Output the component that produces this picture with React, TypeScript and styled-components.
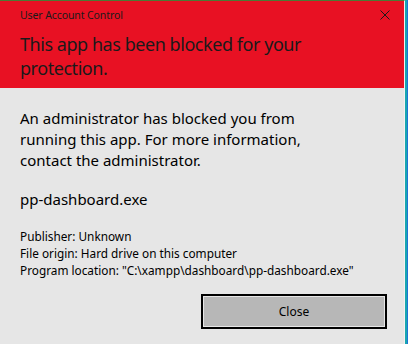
import React from "react";
import styled, { createGlobalStyle } from "styled-components";

const Global = createGlobalStyle`
  html, body { margin: 0; padding: 0; background: #e6e6e6; }
  body { font-family: "Noto Sans", "Open Sans", sans-serif; color: #000; }
`;

const Screen = styled.div`
  width: 408px;
  height: 344px;
  display: flex;
  overflow: hidden;
`;

const Dialog = styled.div`
  flex: 1;
  display: flex;
  flex-direction: column;
  background: #e6e6e6;
  border-top: 1px solid #4b7a34;
  border-right: 1px solid #f2f2f2;
`;

const EdgeStripe = styled.div`
  width: 3px;
  background: linear-gradient(to right, #19a6b0 0 2px, #1d74d6 2px 3px);
`;

const Header = styled.div`
  background: #e81123;
  height: 87px;
  padding: 0 20px;
  display: flex;
  flex-direction: column;
  color: #1a1a1a;
`;

const TitleBar = styled.div`
  display: flex;
  justify-content: space-between;
  align-items: center;
  height: 28px;
`;

const Caption = styled.span`
  font-size: 10.5px;
  letter-spacing: -0.1px;
  line-height: 28px;
`;

const CloseX = styled.svg`
  width: 10px;
  height: 10px;
  margin-right: -6px;
`;

const Heading = styled.div`
  font-size: 18px;
  letter-spacing: -0.45px;
  line-height: 24px;
  margin-top: 3px;
`;

const Body = styled.div`
  padding: 20px 17px 0 20px;
  display: flex;
  flex-direction: column;
`;

const Message = styled.p`
  margin: 0;
  font-size: 15px;
  line-height: 21px;
`;

const FileName = styled.p`
  margin: 18px 0 0;
  font-size: 15px;
  line-height: 21px;
`;

const Details = styled.div`
  margin-top: 18px;
  font-size: 11.8px;
  line-height: 17px;
`;

const Footer = styled.div`
  display: flex;
  justify-content: flex-end;
  padding-top: 15px;
`;

const Button = styled.button`
  width: 186px;
  height: 35px;
  background: #b7b7b7;
  border: 2px solid #000;
  box-shadow: inset 0 0 0 1px #e6e6e6;
  font-family: inherit;
  font-size: 12px;
  color: #000;
  padding: 0;
`;

export default function App() {
  return (
    <>
      <Global />
      <Screen>
        <Dialog>
          <Header>
            <TitleBar>
              <Caption>User Account Control</Caption>
              <CloseX viewBox="0 0 10 10">
                <path d="M0.5 0.5 L9.5 9.5 M9.5 0.5 L0.5 9.5" stroke="#1a1a1a" strokeWidth="1" fill="none" />
              </CloseX>
            </TitleBar>
            <Heading>
              This app has been blocked for your
              <br />
              protection.
            </Heading>
          </Header>
          <Body>
            <Message>
              An administrator has blocked you from
              <br />
              running this app. For more information,
              <br />
              contact the administrator.
            </Message>
            <FileName>pp-dashboard.exe</FileName>
            <Details>
              <div>Publisher: Unknown</div>
              <div>File origin: Hard drive on this computer</div>
              <div>Program location: "C:\xampp\dashboard\pp-dashboard.exe"</div>
            </Details>
            <Footer>
              <Button>Close</Button>
            </Footer>
          </Body>
        </Dialog>
        <EdgeStripe />
      </Screen>
    </>
  );
}
